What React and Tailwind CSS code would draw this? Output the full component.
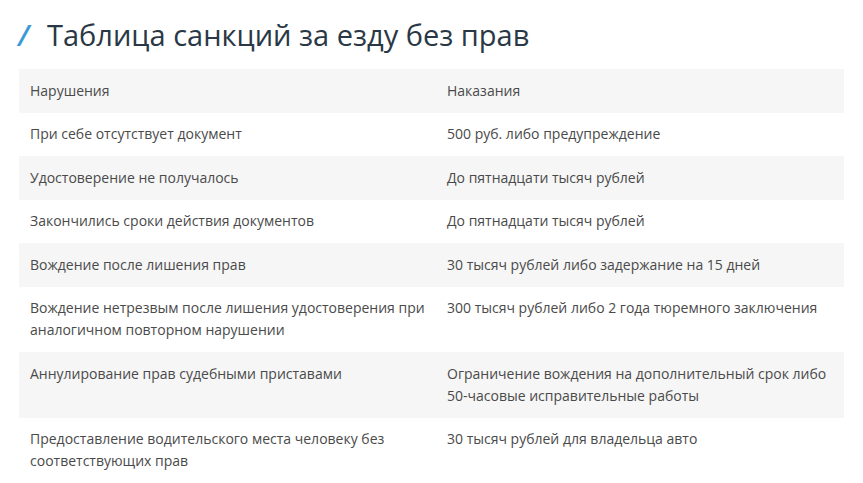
const rows = [
  ["При себе отсутствует документ", "500 руб. либо предупреждение"],
  ["Удостоверение не получалось", "До пятнадцати тысяч рублей"],
  ["Закончились сроки действия документов", "До пятнадцати тысяч рублей"],
  ["Вождение после лишения прав", "30 тысяч рублей либо задержание на 15 дней"],
  [
    "Вождение нетрезвым после лишения удостоверения при аналогичном повторном нарушении",
    "300 тысяч рублей либо 2 года тюремного заключения",
  ],
  [
    "Аннулирование прав судебными приставами",
    "Ограничение вождения на дополнительный срок либо 50-часовые исправительные работы",
  ],
  [
    "Предоставление водительского места человеку без соответствующих прав",
    "30 тысяч рублей для владельца авто",
  ],
];

const App = () => {
  return (
    <div className="w-[863px] h-[483px] overflow-hidden bg-white font-['Open_Sans',sans-serif]">
      <h1 className="flex items-center pl-[18px] pt-[12px] h-[57px] text-[29px] leading-[40px] text-[#2a3846]">
        <span className="text-[#3d9ad6] font-semibold w-[29px] italic">/</span>
        <span>Таблица санкций за езду без прав</span>
      </h1>
      <div className="ml-[19px] w-[825px] mt-[12px] text-[14px] leading-[22px] text-[#4a4a4a]">
        <div className="grid grid-cols-[417px_1fr] bg-[#f6f6f6]">
          <div className="pl-[11px] py-[10.75px]">Нарушения</div>
          <div className="px-[11px] py-[10.75px]">Наказания</div>
        </div>
        {rows.map((row, i) => (
          <div
            key={i}
            className={
              "grid grid-cols-[417px_1fr] " + (i % 2 === 1 ? "bg-[#f6f6f6]" : "bg-white")
            }
          >
            <div className="pl-[11px] py-[10.75px]">{row[0]}</div>
            <div className="pl-[11px] pr-[12px] py-[10.75px]">{row[1]}</div>
          </div>
        ))}
      </div>
    </div>
  );
};

export default App;
